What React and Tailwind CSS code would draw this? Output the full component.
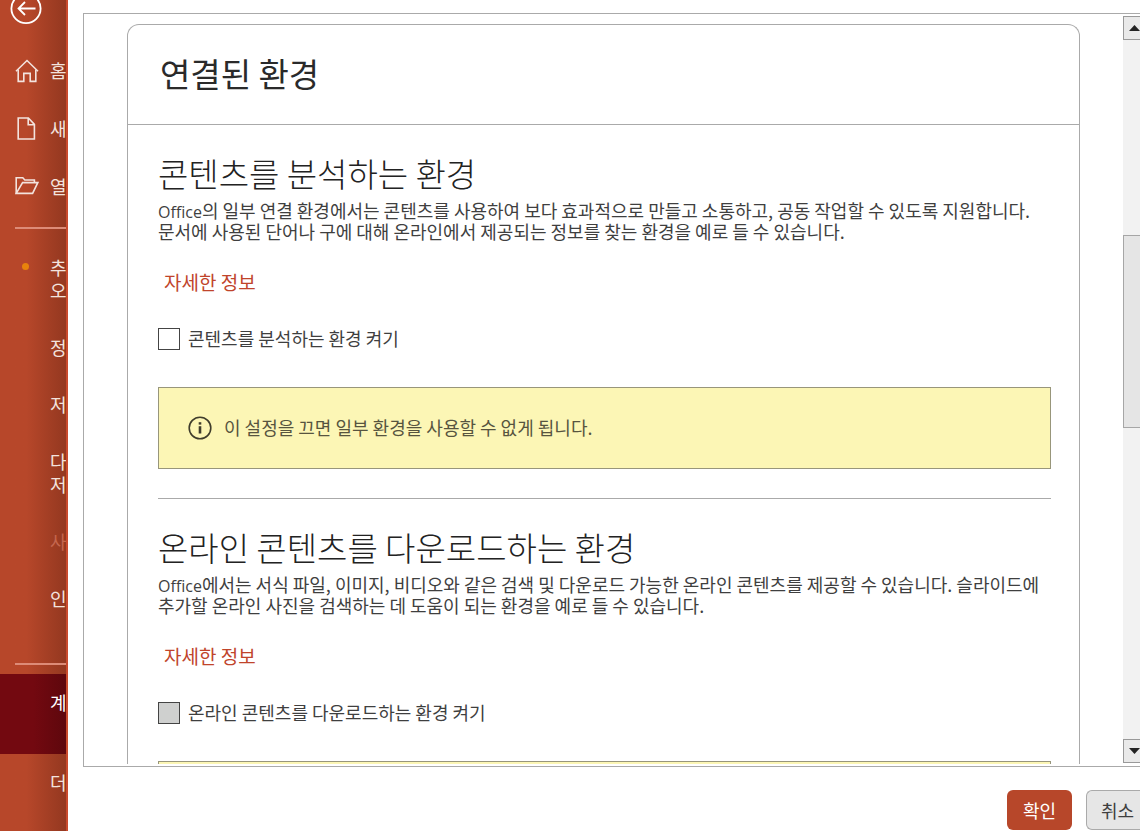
import React from "react";

const stroke = { fill: "none", stroke: "#f3e3de", strokeWidth: 1.6 };

function HomeIcon() {
  return (
    <svg width="24" height="24" viewBox="0 0 24 24" {...stroke} aria-hidden="true">
      <path d="M1 12.2 12 1.5l11 10.7" />
      <path d="M3.2 10.5V22.4h5.6v-8h6.4v8h5.6V10.5" />
    </svg>
  );
}

function FileIcon() {
  return (
    <svg width="24" height="24" viewBox="0 0 24 24" {...stroke} aria-hidden="true">
      <path d="M3.2 1h10.2l6 6.4V22H3.2z" />
      <path d="M13.2 1v6.8h6.2" />
    </svg>
  );
}

function FolderIcon() {
  return (
    <svg width="24" height="24" viewBox="0 0 24 24" {...stroke} aria-hidden="true">
      <path d="M1.2 18.4V2.8h6.6l2 2.2h9.6v2.6" />
      <path d="M1.2 18.4 7.6 7.6h15.2L17.6 18.4z" />
    </svg>
  );
}

function NavItem({ icon, lines, disabled, active }) {
  return (
    <a
      href="#"
      aria-disabled={disabled}
      className={`flex shrink-0 items-start py-[17px] text-lg leading-[23px] ${
        active ? "h-20 bg-linear-to-r from-[#730910] from-50% to-[#5e070d] text-white" : disabled ? "text-[#c5664e]" : "text-[#f3e3de]"
      }`}
    >
      <span className="flex w-[50px] shrink-0 justify-center pl-[3px]">{icon}</span>
      <span>
        {lines.map((line) => (
          <span key={line} className="block">{line}</span>
        ))}
      </span>
    </a>
  );
}

function Sidebar() {
  return (
    <nav className="flex w-[68px] shrink-0 flex-col overflow-hidden border-r-2 border-[#c94a2d] bg-linear-to-r from-[#b7472a] from-40% to-[#943820]">
      <button type="button" aria-label="뒤로" className="-mt-2 mb-[18px] ml-2.5 h-8 w-8 shrink-0">
        <svg width="32" height="32" viewBox="0 0 32 32" fill="none" stroke="#fff" strokeWidth="1.8" aria-hidden="true">
          <circle cx="16" cy="16.5" r="14.6" />
          <path d="M25.5 16.5H9M15 10l-6.5 6.5L15 23" />
        </svg>
      </button>
      <NavItem icon={<HomeIcon />} lines={["홈"]} />
      <NavItem icon={<FileIcon />} lines={["새"]} />
      <NavItem icon={<FolderIcon />} lines={["열"]} />
      <hr className="mt-[11px] mb-2.5 ml-[15px] shrink-0 border-t-2 border-[#dd8b77]" />
      <NavItem icon={<span className="mt-[7px] mr-0.5 h-[7px] w-[7px] rounded-full bg-[#e8830c]" />} lines={["추", "오"]} />
      <NavItem lines={["정"]} />
      <NavItem lines={["저"]} />
      <NavItem lines={["다", "저"]} />
      <NavItem lines={["사"]} disabled />
      <NavItem lines={["인"]} />
      <hr className="mt-9 mb-[9px] ml-[15px] shrink-0 border-t-2 border-[#dd8b77]" />
      <NavItem lines={["계"]} active />
      <NavItem lines={["더"]} />
    </nav>
  );
}

function Notice({ children }) {
  return (
    <div className="mt-[37px] flex h-[82px] items-center gap-3 border border-[#98967b] bg-[#fcf6b5] pl-[29px] text-lg text-[#57543f]">
      <svg width="24" height="24" viewBox="0 0 24 24" fill="none" stroke="#3f3d2c" aria-hidden="true">
        <circle cx="12" cy="12" r="10.8" strokeWidth="1.6" />
        <path d="M12 10.2V17.5" strokeWidth="2.6" />
        <path d="M12 6.2v2.4" strokeWidth="2.6" />
      </svg>
      {children && <p className="pb-0.5">{children}</p>}
    </div>
  );
}

function Section({ id, title, text, label, notice, filled }) {
  return (
    <section className="pt-7">
      <h2 className="text-[33px] leading-10 font-light text-[#222]">{title}</h2>
      <p className="mt-[7px] text-lg leading-[21px] break-keep">
        <span className="font-['Open_Sans',sans-serif] text-base leading-none">Office</span>
        {text}
      </p>
      <a href="#" className="mt-7 ml-1.5 block w-fit text-[19px] leading-6 text-[#c0442b]">자세한 정보</a>
      <div className="mt-[34px] flex h-[22px] items-start gap-2">
        <input
          id={id}
          type="checkbox"
          className={`h-[22px] w-[22px] appearance-none border border-[#444] ${filled ? "bg-[#cfd0cf]" : "bg-white"}`}
        />
        <label htmlFor={id} className="text-lg leading-5">{label}</label>
      </div>
      <Notice>{notice}</Notice>
    </section>
  );
}

function Scrollbar() {
  return (
    <div className="mt-0.5 mb-px flex w-[17px] shrink-0 flex-col bg-[#f2f2f2]">
      <button type="button" aria-label="위로 스크롤" className="flex h-6 items-center border border-r-0 border-[#999] bg-[#e9e9e9] pl-[5px]">
        <svg width="11" height="6" viewBox="0 0 11 6" aria-hidden="true"><path d="M0 6 5.5 0 11 6z" fill="#222" /></svg>
      </button>
      <div className="grow-[195]" />
      <div className="h-[193px] border border-r-0 border-[#a6a6a6] bg-[#e5e5e5]" />
      <div className="grow-[312]" />
      <button type="button" aria-label="아래로 스크롤" className="flex h-6 items-center border border-r-0 border-[#999] bg-[#e9e9e9] pl-[5px]">
        <svg width="11" height="6" viewBox="0 0 11 6" aria-hidden="true"><path d="M0 0 5.5 6 11 0z" fill="#222" /></svg>
      </button>
    </div>
  );
}

export default function App() {
  return (
    <div className="flex h-screen overflow-hidden bg-white font-['Noto_Sans_CJK_KR',sans-serif] text-[#3f3f3f]">
      <Sidebar />
      <main className="flex min-w-0 flex-1 flex-col pt-[13px] pl-[15px]">
        <div className="flex min-h-0 flex-1 border border-r-0 border-[#aaa] pb-0.5">
          <div className="min-w-0 flex-1 overflow-hidden px-[43px] pt-2.5">
            <div className="rounded-t-xl border border-b-0 border-[#aaa]">
              <header className="flex h-[100px] items-center border-b border-[#aaa] pb-1 pl-8">
                <h1 className="text-[33px] leading-10 text-[#2a2a2a]">연결된 환경</h1>
              </header>
              <div className="pr-7 pl-[30px]">
                <Section
                  id="analyze"
                  title="콘텐츠를 분석하는 환경"
                  text="의 일부 연결 환경에서는 콘텐츠를 사용하여 보다 효과적으로 만들고 소통하고, 공동 작업할 수 있도록 지원합니다. 문서에 사용된 단어나 구에 대해 온라인에서 제공되는 정보를 찾는 환경을 예로 들 수 있습니다."
                  label="콘텐츠를 분석하는 환경 켜기"
                  notice="이 설정을 끄면 일부 환경을 사용할 수 없게 됩니다."
                />
                <hr className="mt-[29px] border-[#aaa]" />
                <Section
                  id="download"
                  title="온라인 콘텐츠를 다운로드하는 환경"
                  text="에서는 서식 파일, 이미지, 비디오와 같은 검색 및 다운로드 가능한 온라인 콘텐츠를 제공할 수 있습니다. 슬라이드에 추가할 온라인 사진을 검색하는 데 도움이 되는 환경을 예로 들 수 있습니다."
                  label="온라인 콘텐츠를 다운로드하는 환경 켜기"
                  filled
                />
              </div>
            </div>
          </div>
          <Scrollbar />
        </div>
        <footer className="flex shrink-0 justify-end gap-3.5 pt-[23px] pb-px text-lg">
          <button type="button" className="h-10 w-[65px] rounded-md bg-[#b7472a] text-white">확인</button>
          <button type="button" className="h-10 w-[54px] rounded-l-md border border-r-0 border-[#aaa] bg-[#e6e6e6] pl-2">취소</button>
        </footer>
      </main>
    </div>
  );
}
